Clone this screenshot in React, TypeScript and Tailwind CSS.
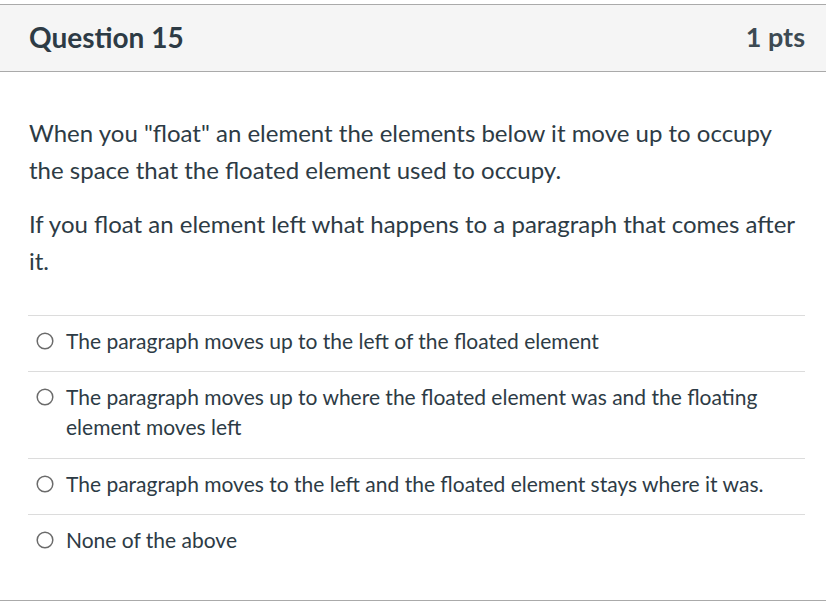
const answers = [
  "The paragraph moves up to the left of the floated element",
  "The paragraph moves up to where the floated element was and the floating element moves left",
  "The paragraph moves to the left and the floated element stays where it was.",
  "None of the above",
];

function Radio() {
  return (
    <svg width="18" height="18" viewBox="0 0 18 18" className="shrink-0 mt-[6px]">
      <circle cx="9" cy="9" r="7.8" fill="white" stroke="#6b6b6b" strokeWidth="1.5" />
    </svg>
  );
}

export default function App() {
  return (
    <div className="w-[826px] h-[603px] bg-white pt-[4px] text-[#2d3b45]" style={{ fontFamily: "Lato, 'Open Sans', sans-serif" }}>
      <div className="border-t border-b border-[#aaaaaa] bg-[#f5f5f5] h-[68px] flex items-center justify-between pl-[29px] pr-[21px] pb-[2px]">
        <span className="text-[28px] font-bold">Question 15</span>
        <span className="text-[27px] font-bold text-[#3d4a53]">1 pts</span>
      </div>
      <div className="border-b border-[#aaaaaa] h-[529px] px-[28px]">
        <div className="pt-[42px] pl-[1px] text-[24px] leading-[37px]">
          <p>When you "float" an element the elements below it move up to occupy the space that the floated element used to occupy.</p>
          <p className="mt-[17px]">If you float an element left what happens to a paragraph that comes after it.</p>
        </div>
        <div className="mt-[36px] w-[777px]">
          {answers.map((a, i) => (
            <div key={a} className={`border-t border-[#dcdcdc] flex gap-[12px] pl-[8px] pr-[20px] pt-[10px] text-[21px] leading-[30px] ${i === 1 ? "pb-[16px]" : "pb-[15px]"}`}>
              <Radio />
              <span>{a}</span>
            </div>
          ))}
        </div>
      </div>
    </div>
  );
}
